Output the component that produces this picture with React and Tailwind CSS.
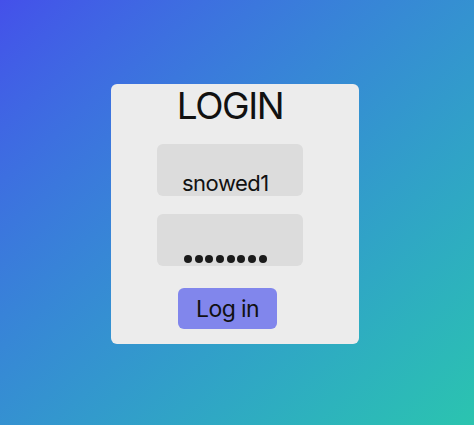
import React from 'react'

const App = () => {
  const username = 'snowed1'
  const passwordLength = 8

  return (
    <div className="min-h-screen w-full flex items-center justify-center bg-gradient-to-br from-[#4450ea] to-[#2bc4af] font-['Inter',sans-serif]">
      {/* Login card */}
      <div className="w-[248px] bg-[#ececec] rounded-md flex flex-col items-center pr-[10px] pb-[15px] ml-[-4px] mt-[3px]">
        <h1 className="text-[37px] leading-[44px] text-[#111] font-normal tracking-[-1.4px]">LOGIN</h1>

        <div className="mt-[16px] w-[146px] h-[52px] bg-[#dcdcdc] rounded-md flex items-end pl-[25px]">
          <span className="text-[22px] leading-[26px] text-[#111] tracking-[-0.5px]">{username}</span>
        </div>

        <div className="mt-[18px] w-[146px] h-[52px] bg-[#dcdcdc] rounded-md flex items-end pl-[27px] pb-[3px]">
          <div className="flex gap-[2.7px]">
            {[...Array(passwordLength)].map((_, i) => (
              <div key={i} className="w-2 h-2 rounded-full bg-[#1a1a1a]" />
            ))}
          </div>
        </div>

        <button className="mt-[22px] mr-[5px] w-[99px] h-[41px] bg-[#8186ec] rounded-md text-[23px] leading-[28px] text-[#111] tracking-[-0.6px]">
          Log in
        </button>
      </div>
    </div>
  )
}

export default App
